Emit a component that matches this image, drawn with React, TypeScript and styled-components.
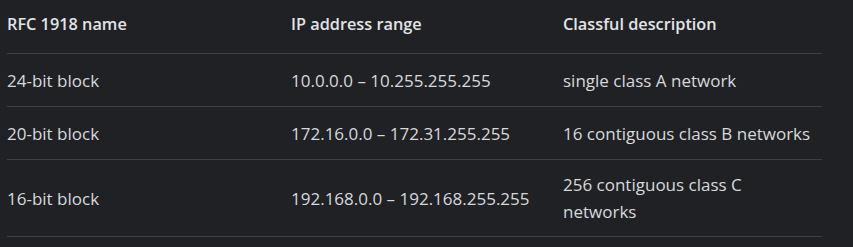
import React from "react";
import styled, { createGlobalStyle } from "styled-components";

const Global = createGlobalStyle`
  html, body {
    margin: 0;
    padding: 0;
    background: #202124;
  }
  body {
    font-family: "Open Sans", Roboto, "Liberation Sans", Arial, sans-serif;
  }
`;

const Page = styled.div`
  width: 853px;
  height: 247px;
  overflow: hidden;
  background: #202124;
  padding: 0 31px 0 7px;
  box-sizing: border-box;
`;

const Table = styled.div`
  display: grid;
  grid-template-columns: 284px 272px 1fr;
  width: 815px;
`;

const Row = styled.div`
  display: contents;
`;

const Cell = styled.div<{ $head?: boolean }>`
  box-sizing: border-box;
  min-height: 53px;
  display: flex;
  align-items: center;
  padding: ${(p) => (p.$head ? "11px 6px 15px 0" : "11px 6px 11px 0")};
  border-bottom: 1px solid #3c4043;
  font-size: ${(p) => (p.$head ? "16.3px" : "17px")};
  line-height: 27px;
  font-weight: ${(p) => (p.$head ? 600 : 400)};
  color: ${(p) => (p.$head ? "#e3e4e6" : "#d7d9dc")};
`;

const headers = ["RFC 1918 name", "IP address range", "Classful description"];
const rows = [
  ["24-bit block", "10.0.0.0 – 10.255.255.255", "single class A network"],
  ["20-bit block", "172.16.0.0 – 172.31.255.255", "16 contiguous class B networks"],
  ["16-bit block", "192.168.0.0 – 192.168.255.255", "256 contiguous class C networks"],
];

export default function App() {
  return (
    <>
      <Global />
      <Page>
        <Table>
          <Row>
            {headers.map((h) => (
              <Cell $head key={h}>
                {h}
              </Cell>
            ))}
          </Row>
          {rows.map((r) => (
            <Row key={r[0]}>
              {r.map((c) => (
                <Cell key={c}>{c}</Cell>
              ))}
            </Row>
          ))}
        </Table>
      </Page>
    </>
  );
}
